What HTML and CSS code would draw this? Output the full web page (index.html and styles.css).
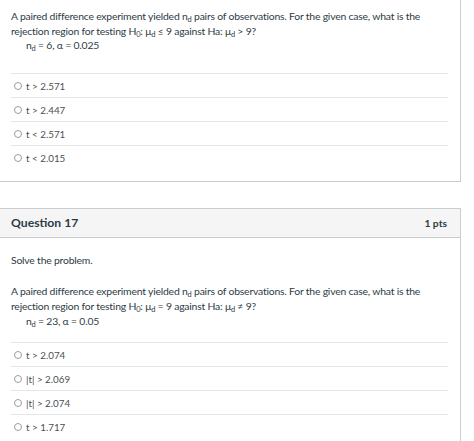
FILE: index.html
```html
<!DOCTYPE html>
<html>
<head>
<meta charset="utf-8">
<link rel="stylesheet" href="styles.css">
</head>
<body>
<div class="card card-prev">
  <div class="qtext">
    <p class="para">A paired difference experiment yielded n<sub>d</sub> pairs of observations. For the given case, what is the rejection region for testing H<sub>0</sub>: μ<sub>d</sub> ≤ 9 against Ha: μ<sub>d</sub> &gt; 9?</p>
    <p class="given">n<sub>d</sub> = 6, α = 0.025</p>
  </div>
  <ul class="answers answers-prev">
    <li><span class="radio"></span><span>t &gt; 2.571</span></li>
    <li><span class="radio"></span><span>t &gt; 2.447</span></li>
    <li><span class="radio"></span><span>t &lt; 2.571</span></li>
    <li><span class="radio"></span><span>t &lt; 2.015</span></li>
  </ul>
</div>

<div class="card card-q">
  <div class="head">
    <span class="title">Question 17</span>
    <span class="pts">1 pts</span>
  </div>
  <div class="qtext qtext-q">
    <p class="solve">Solve the problem.</p>
    <p class="para">A paired difference experiment yielded n<sub>d</sub> pairs of observations. For the given case, what is the rejection region for testing H<sub>0</sub>: μ<sub>d</sub> = 9 against Ha: μ<sub>d</sub> ≠ 9?</p>
    <p class="given given-q">n<sub>d</sub> = 23, α = 0.05</p>
  </div>
  <ul class="answers answers-q">
    <li><span class="radio"></span><span>t &gt; 2.074</span></li>
    <li><span class="radio"></span><span>|t| &gt; 2.069</span></li>
    <li><span class="radio"></span><span>|t| &gt; 2.074</span></li>
    <li><span class="radio"></span><span>t &gt; 1.717</span></li>
  </ul>
</div>
</body>
</html>
```

FILE: styles.css
```css
html, body {
  margin: 0;
  padding: 0;
  background: #ffffff;
}
body {
  font-family: Lato, "Open Sans", sans-serif;
  color: #2d3b45;
}
.card {
  width: 461px;
  box-sizing: border-box;
  border-right: 1px solid #c7cdd1;
  border-bottom: 1px solid #c7cdd1;
}
.qtext {
  padding: 9px 12px 0 11px;
  font-size: 10.4px;
  letter-spacing: -0.2px;
  line-height: 14.5px;
}
.para {
  margin: 0;
}
.given {
  margin: 0;
  padding-left: 15px;
  line-height: 15px;
}
sub {
  font-size: 0.72em;
  vertical-align: -0.3em;
  line-height: 0;
}
.answers {
  list-style: none;
  margin: 0 12px 0 11px;
  padding: 0 0 12px;
}
.answers-prev {
  margin-top: 20px;
}
.answers li {
  border-top: 1px solid #e6e8ea;
  height: 23px;
  display: flex;
  align-items: center;
  gap: 4px;
  padding-left: 3px;
  font-size: 9.8px;
  color: #4b4f52;
}
.radio {
  width: 8px;
  height: 8px;
  border: 1px solid #9a9ea1;
  border-radius: 50%;
  box-sizing: border-box;
  flex: none;
}
.card-q {
  margin-top: 26px;
  border-top: 1px solid #c7cdd1;
}
.head {
  height: 28px;
  background: #f5f5f5;
  border-bottom: 1px solid #c7cdd1;
  display: flex;
  align-items: center;
  justify-content: space-between;
  padding: 0 13px 0 11px;
}
.title {
  font-size: 12.2px;
  font-weight: 700;
  margin-top: -2px;
}
.pts {
  font-size: 10.3px;
  font-weight: 700;
}
.qtext-q {
  padding-top: 15px;
}
.solve {
  margin: 0 0 16px;
  line-height: 15px;
}
.given-q {
  margin-top: 1px;
}
.answers-q {
  margin-top: 13px;
}
```
